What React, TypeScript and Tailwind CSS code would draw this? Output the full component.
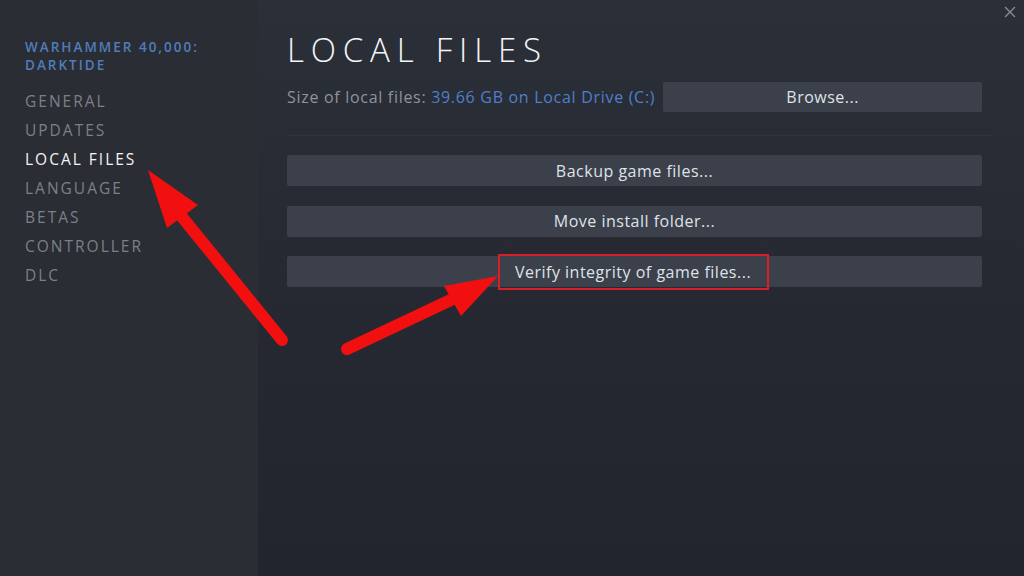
import React from "react";

const navItems = ["GENERAL", "UPDATES", "LOCAL FILES", "LANGUAGE", "BETAS", "CONTROLLER", "DLC"];

function ActionButton({ label, boxed }: { label: string; boxed?: boolean }) {
  return (
    <div className="h-[31px] w-full bg-[#3b404b] rounded-[2px] flex items-center justify-center">
      {boxed ? (
        <span className="border-2 border-[#d61f26] h-[36px] w-[271px] flex items-center justify-center -ml-[3px]">
          <span className="text-[16px] tracking-[0.5px] text-[#dfe3e8]">{label}</span>
        </span>
      ) : (
        <span className="text-[16px] tracking-[0.5px] text-[#dfe3e8]">{label}</span>
      )}
    </div>
  );
}

export default function App() {
  return (
    <div
      className="relative w-[1024px] h-[576px] flex overflow-hidden"
      style={{ fontFamily: '"Open Sans", "Noto Sans", sans-serif' }}
    >
      {/* Sidebar */}
      <div className="w-[258px] h-full bg-[#2a2d33] pl-[25px] pt-[38px] flex flex-col">
        <div className="text-[13.5px] leading-[18px] font-semibold tracking-[2px] text-[#4f7dbb] whitespace-nowrap">
          WARHAMMER 40,000:
          <br />
          DARKTIDE
        </div>
        <div className="mt-[13px] flex flex-col">
          {navItems.map((item) => (
            <div
              key={item}
              className={
                "h-[29px] flex items-center text-[15.5px] tracking-[2px] " +
                (item === "LOCAL FILES" ? "text-[#f2f4f6] font-medium" : "text-[#7c8088]")
              }
            >
              {item}
            </div>
          ))}
        </div>
      </div>

      {/* Main */}
      <div className="relative flex-1 h-full bg-gradient-to-b from-[#2b2f38] via-[#262932] to-[#22252d] pl-[29px] pr-[42px] pt-[28px]">
        <div className="absolute top-[5px] right-[7px]">
          <svg width="14" height="14" viewBox="0 0 14 14">
            <path d="M2 2 L12 12 M12 2 L2 12" stroke="#8a8f97" strokeWidth="1.3" />
          </svg>
        </div>

        <div className="text-[33px] leading-[44px] font-light tracking-[6.8px] text-[#f4f5f7] whitespace-nowrap">
          LOCAL FILES
        </div>

        <div className="mt-[10px] flex items-center">
          <div className="text-[16px] tracking-[0.7px] text-[#8e949c] whitespace-nowrap">
            Size of local files: <span className="text-[#4f7fcc]">39.66 GB on Local Drive (C:)</span>
          </div>
          <div className="ml-[8px] flex-1 h-[30px] bg-[#3b404b] rounded-[2px] flex items-center justify-center text-[16px] tracking-[0.5px] text-[#dfe3e8]">
            Browse...
          </div>
        </div>

        <div className="mt-[23px] h-px bg-[#30343d] -mr-[10px]" />

        <div className="mt-[19px] flex flex-col gap-[19.5px]">
          <ActionButton label="Backup game files..." />
          <ActionButton label="Move install folder..." />
          <ActionButton label="Verify integrity of game files..." boxed />
        </div>
      </div>

      {/* Annotation arrows */}
      <svg className="absolute inset-0 pointer-events-none" width="1024" height="576" viewBox="0 0 1024 576">
        <line x1="282" y1="340" x2="178" y2="212" stroke="#f20f0f" strokeWidth="12" strokeLinecap="round" />
        <polygon points="148,170 198,205 167,228" fill="#f20f0f" />
        <line x1="347" y1="349" x2="455" y2="298" stroke="#f20f0f" strokeWidth="12" strokeLinecap="round" />
        <polygon points="498,276 444,286 461,316" fill="#f20f0f" />
      </svg>
    </div>
  );
}
